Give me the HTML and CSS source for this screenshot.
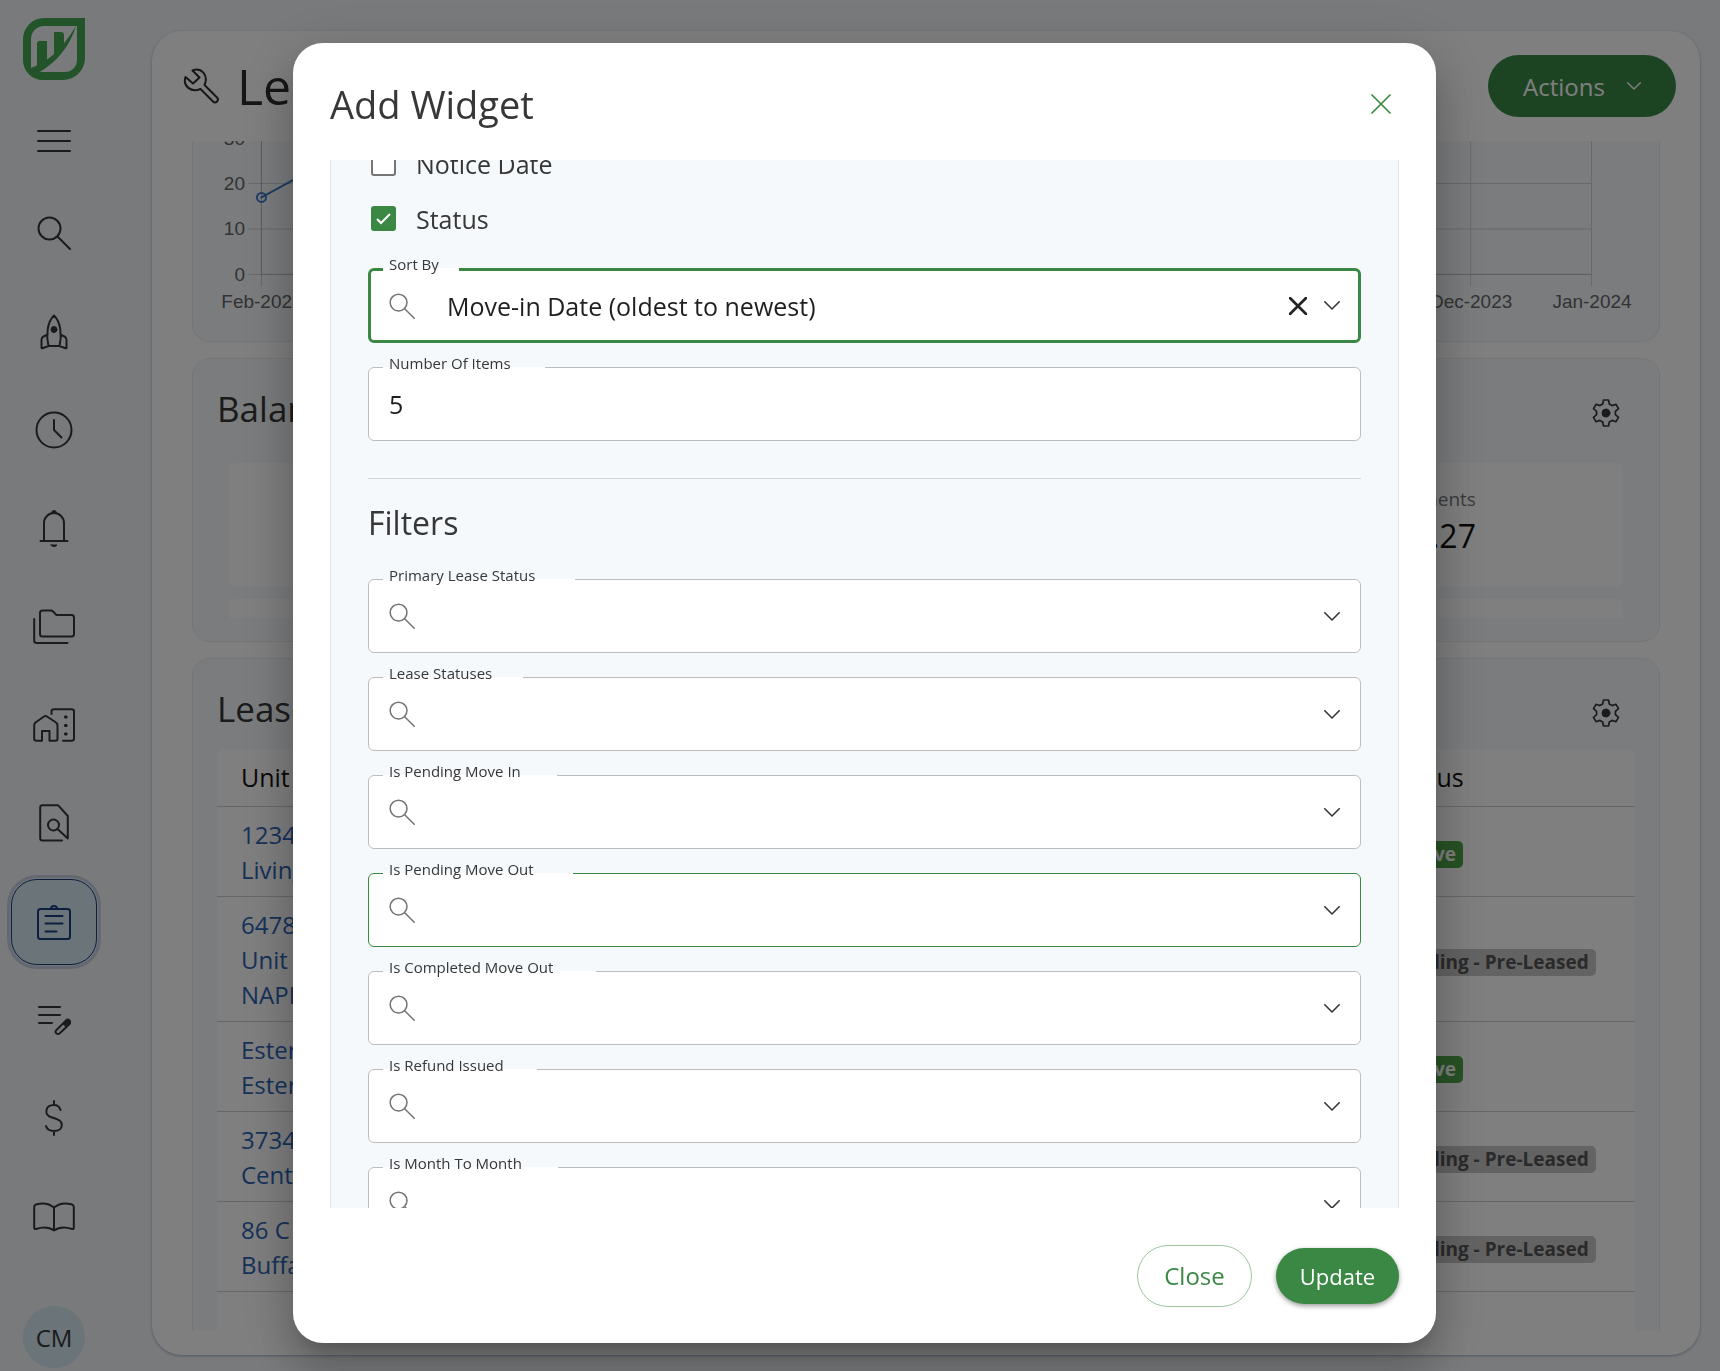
FILE: index.html
```html
<!DOCTYPE html>
<html lang="en">
<head>
<meta charset="utf-8">
<meta name="viewport" content="width=device-width, initial-scale=1">
<title>Add Widget</title>
<link rel="stylesheet" href="styles.css">
</head>
<body>
<svg class="sprite" aria-hidden="true">
  <symbol id="i-search" viewBox="0 0 34 34"><circle cx="12.5" cy="12.5" r="11"/><path d="M20.500 20.500 33 33"/></symbol>
  <symbol id="i-chevron" viewBox="0 0 16 9"><path d="M.8.8 8 8 15.200.8"/></symbol>
  <symbol id="i-x" viewBox="0 0 20 20"><path d="M1 1 19 19M19 1 1 19"/></symbol>
  <symbol id="i-gear" viewBox="-14 -14 28 28"><path d="M-2.500-13H2.500L3.300-9 6.100-7.400 10-8.700 12.500-4.300 9.400-1.600V1.600L12.500 4.300 10 8.700 6.100 7.400 3.300 9 2.500 13H-2.500L-3.300 9-6.100 7.400-10 8.700-12.500 4.300-9.400 1.600V-1.600L-12.500-4.300-10-8.700-6.100-7.400-3.300-9Z"/><circle class="solid" r="4"/></symbol>
</svg>

<div class="app">
  <aside class="sidebar">
    <a class="logo" href="#" aria-label="Home">
      <svg width="62" height="62" viewBox="0 0 62 62"><path fill-rule="evenodd" d="M21 0H62V40A22 22 0 0 1 40 62H20A20 20 0 0 1 0 42V21A21 21 0 0 1 21 0ZM21 8A13 13 0 0 0 8 21V50L16 54H42A12 12 0 0 0 54 42V8Z"/><path d="M14 49V25.500Q14 23 16.500 23H24V43ZM31 38V14H38Q41 14 41 17V28Z"/><path d="M8 50C26 43 38 32 53 8 47 28 34 44 16 54.500L8 54Z"/></svg>
    </a>
    <button class="menu" aria-label="Menu"><svg width="34" height="24" viewBox="0 0 34 24"><path d="M1 2H33M1 12H33M1 22H33"/></svg></button>
    <nav class="nav">
      <a href="#" aria-label="Search"><svg width="34" height="34"><use href="#i-search"/></svg></a>
      <a href="#" aria-label="Launch"><svg width="28" height="36" viewBox="0 0 28 36"><path d="M8.500 32C6 22 7 8 14 1.500 21 8 22 22 19.500 32ZM6.800 21 3.500 22.500Q1.500 23.500 1.500 26V33.500Q1.500 34.500 2.500 34.200L8.500 32M21.200 21 24.500 22.500Q26.500 23.500 26.500 26V33.500Q26.500 34.500 25.500 34.200L19.500 32"/><circle class="solid" cx="14" cy="15.500" r="3"/></svg></a>
      <a href="#" aria-label="Recent"><svg width="38" height="38" viewBox="0 0 38 38"><circle cx="19" cy="19" r="17.500"/><path d="M19 9V19L26.500 26.500"/></svg></a>
      <a href="#" aria-label="Notifications"><svg width="30" height="38" viewBox="0 0 30 38"><path d="M1.500 32H28.500M5 32V14A10 10 0 0 1 25 14V32"/><path class="solid" d="M12.500 4A2.300 2.300 0 1 1 17.500 4ZM12 36H18Q15 39.500 12 36Z"/></svg></a>
      <a href="#" aria-label="Files"><svg width="42" height="36" viewBox="0 0 42 36"><path d="M7 4Q7 1.500 9.500 1.500H18Q19 1.500 20 2.500L23.500 6H38.500Q41 6 41 8.500V25Q41 27.500 38.500 27.500H9.500Q7 27.500 7 25ZM1.200 10V31.500Q1.200 34 3.700 34H34.500"/></svg></a>
      <a href="#" aria-label="Properties"><svg width="42" height="34" viewBox="0 0 42 34"><path d="M1.200 17.500Q1.200 15.500 2.500 14.500L11 8.500Q12.500 7.500 14 8.500L23 14.500Q24.500 15.500 24.500 17.500V30.500Q24.500 32.800 22.500 32.800H16.500V23H9V32.800H3.500Q1.200 32.800 1.200 30.500ZM18.500 6V3.500Q18.500 1.200 21 1.200H38.500Q41 1.200 41 3.500V30.500Q41 32.800 38.500 32.800H30"/><path class="solid" d="M32 8h2v2h-2zM32 16.500h2v2h-2zM32 25h2v2h-2z"/></svg></a>
      <a href="#" aria-label="Screening"><svg width="30" height="38" viewBox="0 0 30 38"><path d="M23 36.500H3.500Q1.200 36.500 1.200 34.200V3.500Q1.200 1.200 3.500 1.200H19L28.800 12V34.500L18.500 25"/><circle cx="14.500" cy="21" r="5.500"/></svg></a>
      <a class="active" href="#" aria-label="Leases" aria-current="page"><span><svg width="34" height="38" viewBox="0 0 34 38"><path d="M14 6A3 3 0 1 1 20 6M3.500 6H30.500Q33 6 33 8.500V33.500Q33 36 30.500 36H3.500Q1 36 1 33.500V8.500Q1 6 3.500 6ZM8.500 13H25.500M8.500 20.500H25.500M8.500 28.500H19.500"/></svg></span></a>
      <a href="#" aria-label="Notes"><svg width="34" height="32" viewBox="0 0 34 32"><path d="M2 3H23M2 11H23M2 19H15M19 26.500 29 16.500A2.300 2.300 0 0 1 32.500 20L22.500 29.500Q21 30.500 19.500 29.500 17.800 28 19 26.500Z"/><path class="solid" d="M26 19.500 29 16.500A2.300 2.300 0 0 1 32.500 20L29.500 23Z"/></svg></a>
      <a href="#" aria-label="Accounting"><svg width="20" height="36" viewBox="0 0 20 36"><path d="M10 1V5M10 31V35M16.500 10C15.500 6.500 13 5 10 5 1 5-.5 15 8 17.500 15 19.500 18 21 17.800 25.500 17.500 29 14.500 31 10 31 5.500 31 3 29.500 2 26"/></svg></a>
      <a href="#" aria-label="Library"><svg width="42" height="30" viewBox="0 0 42 30"><path d="M21 5.500C15 .5 8 1 3 2.500Q1.200 3 1.200 5V25.500Q1.200 27.500 3 27C9 25 16 25 21 28.500 26 25 33 25 39 27Q40.800 27.500 40.800 25.500V5Q40.800 3 39 2.500C34 1 27 .5 21 5.500V28.500"/></svg></a>
    </nav>
    <button class="avatar">CM</button>
  </aside>

  <main class="page">
    <header class="page-head">
      <svg width="36" height="36" viewBox="0 0 36 36"><path d="M9.500 2.500 16.500 9.500 10 15.500 2.500 9C-.5 18 8 25 17.500 21L30 33.500A2.800 2.800 0 0 0 34 29.500L21.500 17C26 7 18-1 9.500 2.500Z"/></svg>
      <h1>Leases</h1>
      <button class="actions">Actions <svg width="14" height="8"><use href="#i-chevron"/></svg></button>
    </header>
    <div class="widgets">
      <section class="widget chart">
        <svg viewBox="0 0 1467 200" role="img" aria-label="Leases by month">
          <path class="grid" d="M56 42.500H1399M56 88H1399M1278.500 0V145M1399.500 0V145M68.500 133V145M56 133.500H68"/>
          <path class="axis" d="M68.500 0V133.500H1399"/>
          <path class="series" d="M68.500 56.500 190 -10"/><circle class="series" cx="68.500" cy="56.500" r="4.500"/>
          <g text-anchor="end"><text x="52" y="4">30</text><text x="52" y="49">20</text><text x="52" y="94">10</text><text x="52" y="140">0</text></g>
          <g text-anchor="middle"><text x="69" y="167">Feb-2023</text><text x="1279" y="167">Dec-2023</text><text x="1400" y="167">Jan-2024</text></g>
        </svg>
      </section>
      <section class="widget balances">
        <header><h2>Balances</h2><button class="gear" aria-label="Widget settings"><svg width="28" height="28"><use href="#i-gear"/></svg></button></header>
        <div class="totals"><div class="total"><small>Upcoming Payments</small><b>$12,845.27</b></div></div>
        <div class="totals next"></div>
      </section>
      <section class="widget leases">
        <header><h2>Leases</h2><button class="gear" aria-label="Widget settings"><svg width="28" height="28"><use href="#i-gear"/></svg></button></header>
        <table>
          <thead><tr><th>Unit</th><th class="status">Status</th></tr></thead>
          <tbody>
            <tr><td><a href="#">1234<br>Living</a></td><td><span class="badge green">Active</span></td></tr>
            <tr><td><a href="#">6478<br>Unit<br>NAPLES</a></td><td><span class="badge">Pending - Pre-Leased</span></td></tr>
            <tr><td><a href="#">Estero<br>Estero</a></td><td><span class="badge green">Active</span></td></tr>
            <tr><td><a href="#">3734<br>Center</a></td><td><span class="badge">Pending - Pre-Leased</span></td></tr>
            <tr><td><a href="#">86 C<br>Buffalo</a></td><td><span class="badge">Pending - Pre-Leased</span></td></tr>
          </tbody>
        </table>
      </section>
    </div>
  </main>
</div>

<div class="overlay">
  <div class="modal" role="dialog" aria-modal="true" aria-labelledby="dlg-title">
    <header class="modal-head">
      <h2 id="dlg-title">Add Widget</h2>
      <button class="dismiss" aria-label="Dismiss"><svg width="20" height="20"><use href="#i-x"/></svg></button>
    </header>
    <div class="scroll">
      <form class="form" id="widget-form">
        <div class="checks">
          <label><input type="checkbox"><span>Notice Date</span></label>
          <label><input type="checkbox" checked><span>Status</span></label>
        </div>
        <div class="fields">
          <div class="field focus">
            <label for="f1">Sort By</label><svg class="lens" width="26" height="26"><use href="#i-search"/></svg>
            <input id="f1" type="text" value="Move-in Date (oldest to newest)">
            <button type="button" class="clear" aria-label="Clear"><svg width="18" height="18"><use href="#i-x"/></svg></button>
            <svg class="chev" width="16" height="9"><use href="#i-chevron"/></svg>
            <fieldset><legend data-label="Sort By"></legend></fieldset>
          </div>
          <div class="field">
            <label for="f2">Number Of Items</label><input id="f2" type="text" value="5">
            <fieldset><legend data-label="Number Of Items"></legend></fieldset>
          </div>
        </div>
        <hr>
        <h3>Filters</h3>
        <div class="fields">
          <div class="field"><label for="f3">Primary Lease Status</label><svg class="lens" width="26" height="26"><use href="#i-search"/></svg><input id="f3" type="text"><svg class="chev" width="16" height="9"><use href="#i-chevron"/></svg><fieldset><legend data-label="Primary Lease Status"></legend></fieldset></div>
          <div class="field"><label for="f4">Lease Statuses</label><svg class="lens" width="26" height="26"><use href="#i-search"/></svg><input id="f4" type="text"><svg class="chev" width="16" height="9"><use href="#i-chevron"/></svg><fieldset><legend data-label="Lease Statuses"></legend></fieldset></div>
          <div class="field"><label for="f5">Is Pending Move In</label><svg class="lens" width="26" height="26"><use href="#i-search"/></svg><input id="f5" type="text"><svg class="chev" width="16" height="9"><use href="#i-chevron"/></svg><fieldset><legend data-label="Is Pending Move In"></legend></fieldset></div>
          <div class="field hover"><label for="f6">Is Pending Move Out</label><svg class="lens" width="26" height="26"><use href="#i-search"/></svg><input id="f6" type="text"><svg class="chev" width="16" height="9"><use href="#i-chevron"/></svg><fieldset><legend data-label="Is Pending Move Out"></legend></fieldset></div>
          <div class="field"><label for="f7">Is Completed Move Out</label><svg class="lens" width="26" height="26"><use href="#i-search"/></svg><input id="f7" type="text"><svg class="chev" width="16" height="9"><use href="#i-chevron"/></svg><fieldset><legend data-label="Is Completed Move Out"></legend></fieldset></div>
          <div class="field"><label for="f8">Is Refund Issued</label><svg class="lens" width="26" height="26"><use href="#i-search"/></svg><input id="f8" type="text"><svg class="chev" width="16" height="9"><use href="#i-chevron"/></svg><fieldset><legend data-label="Is Refund Issued"></legend></fieldset></div>
          <div class="field"><label for="f9">Is Month To Month</label><svg class="lens" width="26" height="26"><use href="#i-search"/></svg><input id="f9" type="text"><svg class="chev" width="16" height="9"><use href="#i-chevron"/></svg><fieldset><legend data-label="Is Month To Month"></legend></fieldset></div>
        </div>
      </form>
    </div>
    <footer class="modal-foot">
      <button class="close">Close</button>
      <button class="update" form="widget-form">Update</button>
    </footer>
  </div>
</div>
</body>
</html>
```
FILE: styles.css
```css
:root {
  --green: #3b8845;
  --ink: #373737;
  --panel: #f5f9fc;
  --line: #bdbdbd;
}
* { box-sizing: border-box; }
body {
  margin: 0;
  background: #f1f4f7;
  color: var(--ink);
  font-family: "Open Sans", "Noto Sans", sans-serif;
  font-size: 24px;
}
h1, h2, h3 { margin: 0; font-weight: 400; }
button { font: inherit; color: inherit; border: 0; padding: 0; background: none; cursor: pointer; }
svg { display: block; flex: none; fill: none; stroke: currentColor; stroke-width: 2; stroke-linecap: round; stroke-linejoin: round; }
.solid { fill: currentColor; stroke-width: 1; }
.sprite { position: absolute; width: 0; height: 0; }

.app { display: flex; height: 100vh; overflow: hidden; }

/* Sidebar */
.sidebar {
  display: flex;
  flex-direction: column;
  flex: none;
  width: 152px;
  padding: 18px 44px 3px 0;
  align-items: center;
}
.logo svg { fill: #46a653; stroke: none; }
.menu { display: grid; place-items: center; flex: none; width: 62px; height: 62px; margin: 30px 0 12px; }
.nav { display: flex; flex-direction: column; align-items: center; flex: 1; }
.nav a { display: grid; place-items: center; flex: 1; width: 108px; color: inherit; }
.nav .active { color: #1b3f7c; }
.nav .active span {
  display: grid;
  place-items: center;
  width: 86px;
  height: 86px;
  border: 1px solid #1b3f7c;
  border-radius: 26px;
  background: #d5e8f3;
  box-shadow: 0 0 0 1px #e2eaf4, 0 0 0 4px #c9d2e2;
}
.avatar { width: 62px; height: 62px; flex: none; margin-top: 40px; border-radius: 50%; background: #d5e8f3; }

/* Page card */
.page {
  display: flex;
  flex-direction: column;
  flex: 1;
  min-width: 0;
  margin: 31px 20px 16px 0;
  padding-bottom: 24px;
  border-radius: 30px;
  background: #fff;
  box-shadow: 0 1px 3px #9fb0c4;
}
.page-head { display: flex; align-items: center; height: 110px; padding: 0 24px 0 31px; flex: none; color: #2c2c2c; }
.page-head h1 { margin-left: 18px; font-size: 50px; line-height: 60px; }
.actions {
  display: flex;
  align-items: center;
  justify-content: center;
  gap: 22px;
  width: 188px;
  height: 62px;
  margin-left: auto;
  border-radius: 31px;
  background: var(--green);
  color: #fff;
}
.actions svg, .chev { stroke-width: 1.6; }
.widgets { display: flex; flex-direction: column; gap: 16px; flex: 1; min-height: 0; padding: 0 40px; overflow: hidden; }
.widget { flex: none; border: 1px solid #e8ebee; border-radius: 18px; background: var(--panel); }
.widget header { display: flex; align-items: flex-end; justify-content: space-between; padding: 0 39px 0 24px; }
.widget h2 { font-size: 35px; line-height: 48px; }
.gear { padding-bottom: 6px; }
.gear svg { stroke-width: 1.7; }
.chart { border-top: 0; border-radius: 0 0 18px 18px; overflow: hidden; }
.chart svg { width: 100%; height: auto; stroke-width: 1; }
.chart text { fill: #666; stroke: none; font: 19px "Liberation Sans", Arial, sans-serif; }
.chart .grid { stroke: #cfd2d5; }
.chart .axis { stroke: #b4b7ba; }
.chart .series { stroke: #3f78c4; stroke-width: 2; }
.balances { height: 284px; padding-top: 26px; overflow: hidden; }
.totals { display: grid; grid-template-columns: 2fr 1fr; height: 124px; margin: 30px 36px 12px; border-radius: 6px; background: #fff; }
.totals.next { height: 19px; margin-top: 0; border-radius: 6px 6px 0 0; }
.total { grid-column: 2; justify-self: center; padding: 24px 12px 0 0; text-align: right; color: #111; }
.total small { display: block; font-size: 19px; line-height: 24px; color: #777; }
.total b { display: block; font-size: 32px; font-weight: 400; line-height: 50px; }
.leases { padding-top: 26px; }
table { width: calc(100% - 48px); margin: 16px 24px 0; border-collapse: separate; border-spacing: 0; border-radius: 6px 6px 0 0; background: #fff; table-layout: fixed; }
table::after { content: ""; display: block; height: 60px; }
th, td { padding: 10px 24px 9px; border-bottom: 1px solid #cfcfcf; text-align: left; line-height: 35px; }
th { height: 58px; font-size: 25px; font-weight: 400; color: #111; }
.status { width: 274px; padding-left: 30px; }
td a { color: #2c64b4; text-decoration: none; }
.badge { display: inline-block; padding: 0 7px; border-radius: 5px; background: #c6c6c6; color: #555; font-size: 19px; font-weight: 700; line-height: 27px; white-space: nowrap; vertical-align: middle; }
.badge.green { padding-left: 12px; background: #4fa64a; color: #fff; }

/* Dialog */
.overlay { position: fixed; inset: 0; display: flex; padding: 43px 284px 28px 293px; background: rgba(0, 0, 0, .5); }
.modal {
  display: flex;
  flex-direction: column;
  flex: 1;
  min-width: 0;
  border-radius: 30px;
  background: #fff;
  box-shadow: 0 12px 18px -8px rgba(0, 0, 0, .2), 0 28px 44px 4px rgba(0, 0, 0, .14), 0 11px 54px 10px rgba(0, 0, 0, .12);
}
.modal-head { display: flex; align-items: center; justify-content: space-between; height: 117px; padding: 4px 45px 0 37px; flex: none; }
.modal-head h2 { font-size: 38px; line-height: 50px; }
.dismiss { color: var(--green); }
.dismiss svg { stroke-width: 1.7; }
.scroll { flex: 1; min-height: 0; margin: 0 37px; border: solid #e2e5e8; border-width: 0 1px; background: var(--panel); overflow: hidden; }
.form { padding: 0 37px; margin-top: -24px; }
.checks label { display: flex; align-items: center; height: 55px; gap: 20px; padding-left: 3px; font-size: 25px; }
.checks input { appearance: none; width: 25px; height: 25px; margin: 0; border: 2px solid #757575; border-radius: 3px; background: #fff; }
.checks input:checked {
  border-color: var(--green);
  background: var(--green) url("data:image/svg+xml,%3Csvg xmlns='http://www.w3.org/2000/svg' viewBox='0 0 21 21'%3E%3Cpath d='M4 11l4 4 9-9' fill='none' stroke='white' stroke-width='2'/%3E%3C/svg%3E") center;
}
.fields { display: flex; flex-direction: column; gap: 24px; }
.checks + .fields { padding-top: 22px; }
.field { position: relative; display: flex; align-items: center; height: 74px; padding: 0 21px; border-radius: 6px; background: #fff; }
.field label { position: absolute; z-index: 1; left: 21px; top: -14px; font-size: 15px; line-height: 20px; }
.field input { flex: 1; min-width: 0; height: 50px; padding: 0; border: 0; outline: 0; background: none; font: inherit; font-size: 25px; color: #1f1f1f; }
.field fieldset { position: absolute; inset: 0; margin: 0; padding: 0 14px; border: 1px solid var(--line); border-radius: 6px; pointer-events: none; }
.field legend { height: 1px; padding: 0 8px; overflow: hidden; visibility: hidden; font-size: 18px; }
.field legend::before { content: attr(data-label); }
.field.focus { height: 75px; }
.field.focus fieldset { border: 3px solid var(--green); padding: 0 12px; }
.field.focus legend { height: 3px; }
.field.hover fieldset { border-color: var(--green); }
.lens { margin-right: 32px; color: #757575; }
.clear { margin-right: 17px; color: #222; }
.clear svg { stroke-width: 3; }
hr { height: 1px; margin: 37px 0 0; border: 0; background: #d3d7da; }
h3 { padding: 22px 0 34px; font-size: 32px; line-height: 44px; }
.modal-foot { display: flex; align-items: center; justify-content: flex-end; gap: 24px; height: 135px; padding: 0 37px; flex: none; }
.close { width: 115px; height: 62px; border: 1px solid #9dc5a2; border-radius: 31px; color: var(--green); }
.update { width: 123px; height: 56px; border-radius: 28px; background: var(--green); color: #fff; font-size: 22px; box-shadow: 0 2px 5px rgba(0, 0, 0, .4); }
```
